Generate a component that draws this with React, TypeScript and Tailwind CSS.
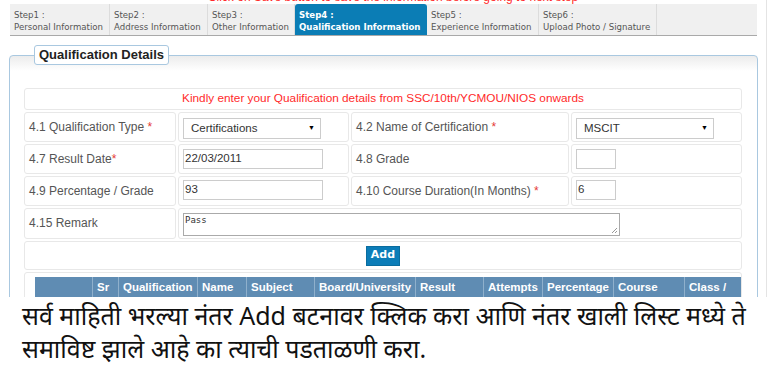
import React from "react";

const tabs = [
  { step: "Step1 :", name: "Personal Information", w: "w-[100px]" },
  { step: "Step2 :", name: "Address Information", w: "w-[98px]" },
  { step: "Step3 :", name: "Other Information", w: "w-[87px]" },
  { step: "Step4 :", name: "Qualification Information", w: "w-[132px]", active: true },
  { step: "Step5 :", name: "Experience Information", w: "w-[112px]" },
  { step: "Step6 :", name: "Upload Photo / Signature", w: "w-[118px]" },
];

const cols = [
  { label: "", w: "w-[58px]" },
  { label: "Sr", w: "w-[26px]" },
  { label: "Qualification", w: "w-[79px]" },
  { label: "Name", w: "w-[49px]" },
  { label: "Subject", w: "w-[68px]" },
  { label: "Board/University", w: "w-[101px]" },
  { label: "Result", w: "w-[68px]" },
  { label: "Attempts", w: "w-[59px]" },
  { label: "Percentage", w: "w-[71px]" },
  { label: "Course", w: "w-[71px]" },
  { label: "Class /", w: "w-[45px]" },
];

function Cell({ children, className = "" }: { children?: React.ReactNode; className?: string }) {
  return <div className={`border border-[#e8e8e8] rounded-[3px] bg-white ${className}`}>{children}</div>;
}

function Label({ text, req, tight }: { text: string; req?: boolean; tight?: boolean }) {
  return (
    <Cell className="pl-[4px] pt-[5px] text-[12px] text-[#555]">
      {text}
      {req && <span className="text-[#e53935]">{tight ? "*" : " *"}</span>}
    </Cell>
  );
}

function Select({ value }: { value: string }) {
  return (
    <div className="w-[138px] h-[21px] border border-[#ccc] bg-white flex items-center justify-between pl-[7px] pr-[5px] text-[11.5px] text-[#333]">
      <span>{value}</span>
      <span className="text-[7px] text-black">▼</span>
    </div>
  );
}

function Input({ value, w }: { value: string; w: string }) {
  return (
    <div className={`${w} h-[20px] border border-[#ccc] bg-white flex items-center pl-[1px] text-[11.5px] text-[#333]`}>
      {value}
    </div>
  );
}

export default function App() {
  return (
    <div className="w-[768px] h-[368px] overflow-hidden bg-white font-['Liberation_Sans',Arial,sans-serif]">
      <div className="h-[297px] overflow-hidden w-[767px] border-r border-[#e4e4e4]">
        {/* red notice, cut off at top */}
        <div className="h-[4px] overflow-hidden flex items-end justify-center pl-[20px]">
          <div className="text-[12px] leading-[14px] text-[#ff2a2a] whitespace-nowrap">
            Click on Save button to save the information before going to next step
          </div>
        </div>

        {/* step tabs */}
        <div className="ml-[10px] w-[747px] h-[32px] bg-[#f0f0f0] border-b border-[#a9a9a9] flex font-['DejaVu_Sans',Verdana,sans-serif] text-[8.6px] leading-[12px]">
          {tabs.map((t) => (
            <div
              key={t.step}
              className={`${t.w} px-[4px] pt-[5px] ${
                t.active
                  ? "bg-[#0b7db5] text-white font-bold rounded-t-[3px]"
                  : "text-[#555] border-r border-[#dcdcdc]"
              }`}
            >
              <div>{t.step}</div>
              <div className="whitespace-nowrap">{t.name}</div>
            </div>
          ))}
        </div>

        {/* fieldset */}
        <div className="relative mt-[19px] ml-[9px] w-[749px] h-[300px] border border-[#a9c8e0] rounded-t-[4px] bg-gradient-to-b from-[#ececec] via-white to-white bg-[length:100%_30px] bg-no-repeat">
          <div className="absolute left-[24px] -top-[11px] px-[4px] h-[20px] border border-[#a9c8e0] rounded-[3px] bg-white text-[13px] font-bold text-[#222] flex items-center">
            Qualification Details
          </div>

          <div className="ml-[14px] mt-[32px] w-[718px] flex flex-col gap-[2px]">
            <Cell className="h-[22px] flex items-center justify-center text-[11.8px] text-[#ff2a2a]">
              Kindly enter your Qualification details from SSC/10th/YCMOU/NIOS onwards
            </Cell>

            <div className="grid grid-cols-[152px_171px_218px_171px] gap-[2px]">
              <Label text="4.1 Qualification Type" req />
              <Cell className="h-[30px] pl-[4px] pt-[5px]">
                <Select value="Certifications" />
              </Cell>
              <Label text="4.2 Name of Certification" req />
              <Cell className="pl-[4px] pt-[5px]">
                <Select value="MSCIT" />
              </Cell>

              <Label text="4.7 Result Date" req tight />
              <Cell className="h-[30px] pl-[4px] pt-[4px]">
                <Input value="22/03/2011" w="w-[140px]" />
              </Cell>
              <Label text="4.8 Grade" />
              <Cell className="pl-[4px] pt-[4px]">
                <Input value="" w="w-[40px]" />
              </Cell>

              <Label text="4.9 Percentage / Grade" />
              <Cell className="h-[30px] pl-[4px] pt-[3px]">
                <Input value="93" w="w-[140px]" />
              </Cell>
              <Label text="4.10 Course Duration(In Months)" req />
              <Cell className="pl-[4px] pt-[3px]">
                <Input value="6" w="w-[40px]" />
              </Cell>
            </div>

            <div className="grid grid-cols-[152px_564px] gap-[2px]">
              <Label text="4.15 Remark" />
              <Cell className="h-[31px] pl-[4px] pt-[4px]">
                <div className="relative w-[437px] h-[23px] border border-[#aaa] bg-white pl-[1px] pt-[1px] font-['DejaVu_Sans_Mono',monospace] text-[9px] leading-[11px] text-[#333]">
                  Pass
                  <svg className="absolute right-[1px] bottom-[1px]" width="7" height="7" viewBox="0 0 7 7">
                    <path d="M6 1L1 6M6 4L4 6" stroke="#999" strokeWidth="1" />
                  </svg>
                </div>
              </Cell>
            </div>

            <Cell className="h-[29px] flex items-center justify-center">
              <div className="w-[34px] h-[20px] bg-[#0c7db8] border border-[#0a6d9f] text-white text-[11px] font-bold flex items-center justify-center font-['DejaVu_Sans',Verdana,sans-serif]">
                Add
              </div>
            </Cell>

            <Cell className="h-[40px] pl-[10px] pt-[4px]">
              <div className="flex h-[22px] bg-[#5f8cb3] text-[11.5px] font-bold text-white">
                {cols.map((c, i) => (
                  <div
                    key={i}
                    className={`${c.w} flex items-center pl-[4px] whitespace-nowrap ${
                      i < cols.length - 1 ? "border-r border-[#8fb0cc]" : ""
                    }`}
                  >
                    {c.label}
                  </div>
                ))}
              </div>
            </Cell>
          </div>
        </div>
      </div>

      {/* marathi instruction */}
      <div className="pl-[22px] pt-[6px] text-[25px] leading-[33px] text-[#111] font-['Noto_Sans_Devanagari','Lohit_Devanagari','Noto_Sans',sans-serif] whitespace-nowrap">
        <div>सर्व माहिती भरल्या नंतर Add बटनावर क्लिक करा आणि नंतर खाली लिस्ट मध्ये ते</div>
        <div>समाविष्ट झाले आहे का त्याची पडताळणी करा.</div>
      </div>
    </div>
  );
}
